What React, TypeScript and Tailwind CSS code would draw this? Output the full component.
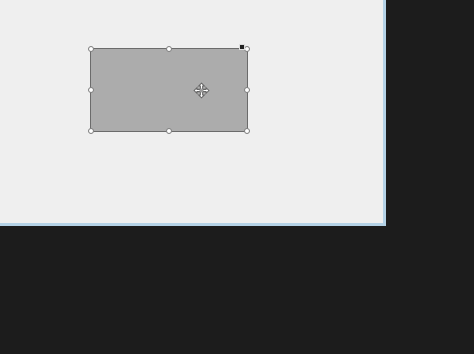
import React from 'react';

const handles = [
  [0, 0],
  [50, 0],
  [100, 0],
  [0, 50],
  [100, 50],
  [0, 100],
  [50, 100],
  [100, 100],
];

function Handle({ x, y }: { x: number; y: number }) {
  return (
    <div
      className="absolute w-[6px] h-[6px] -ml-[3px] -mt-[3px] rounded-full bg-white border border-[#7a7a7a]"
      style={{ left: `${x}%`, top: `${y}%` }}
    />
  );
}

function MoveCursor() {
  return (
    <svg width="17" height="17" viewBox="0 0 15 15" className="absolute left-[102px] top-[33px]">
      <path
        d="M7.5 1 L10 3.5 L8.5 3.5 L8.5 6.5 L11.5 6.5 L11.5 5 L14 7.5 L11.5 10 L11.5 8.5 L8.5 8.5 L8.5 11.5 L10 11.5 L7.5 14 L5 11.5 L6.5 11.5 L6.5 8.5 L3.5 8.5 L3.5 10 L1 7.5 L3.5 5 L3.5 6.5 L6.5 6.5 L6.5 3.5 L5 3.5 Z"
        fill="#fff"
        stroke="#666"
        strokeWidth="0.9"
      />
      <circle cx="7.5" cy="7.5" r="1.8" fill="#9a9a9a" />
    </svg>
  );
}

export default function App() {
  return (
    <div className="w-[474px] h-[354px] bg-[#1c1c1c]">
      <div className="w-[386px] h-[226px] bg-[#efefef] border-r-[3px] border-b-[3px] border-[#b4d2e6] pt-[48px] pl-[90px]">
        <div className="relative w-[158px] h-[84px] bg-[#acacac] border border-[#6b6b6b]">
          {handles.map(([x, y], i) => (
            <Handle key={i} x={x} y={y} />
          ))}
          <div className="absolute -top-[5px] right-[2px] w-[6px] h-[6px] bg-[#222] border border-[#ddd]" />
          <MoveCursor />
        </div>
      </div>
    </div>
  );
}
